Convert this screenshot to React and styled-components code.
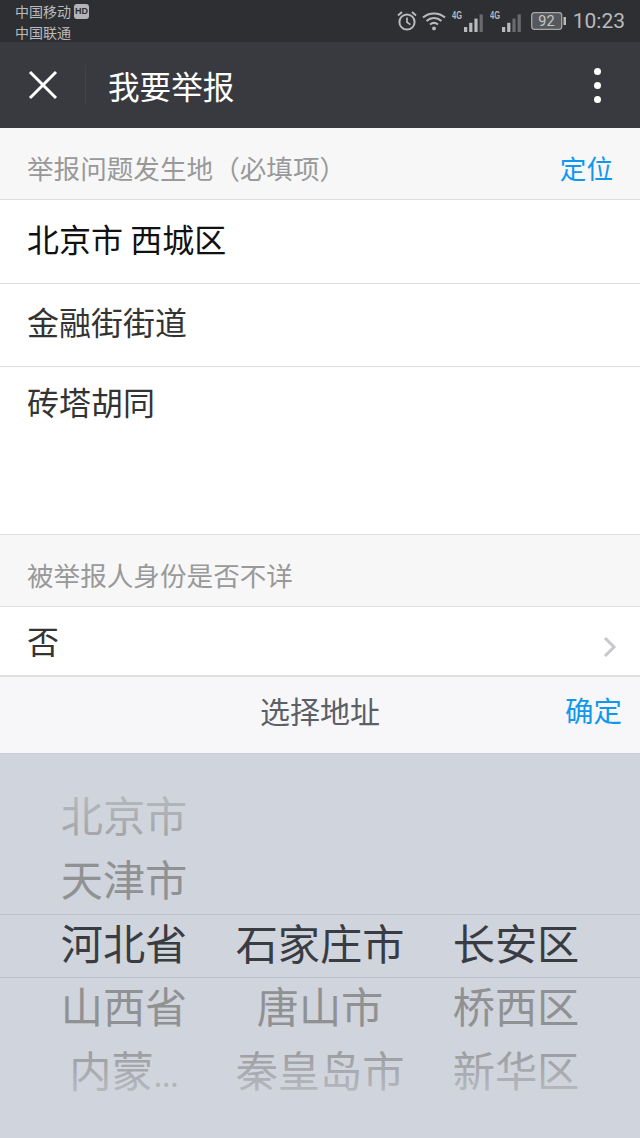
import React from "react";
import styled, { createGlobalStyle } from "styled-components";

const Global = createGlobalStyle`
  html, body { margin: 0; padding: 0; background: #fff; }
  * { box-sizing: border-box; }
  body { font-family: "Noto Sans CJK SC", "Noto Sans", sans-serif; }
`;

const Page = styled.div`
  width: 640px;
  height: 1138px;
  display: flex;
  flex-direction: column;
  overflow: hidden;
`;

const StatusBar = styled.div`
  height: 42px;
  background: #2e2f33;
  display: flex;
  justify-content: space-between;
  align-items: center;
  padding: 0 15px 0 15px;
  color: #b9babc;
`;

const Carriers = styled.div`
  display: flex;
  flex-direction: column;
  font-size: 14px;
  line-height: 21px;
  margin-top: 1px;
`;

const Carrier = styled.div`
  display: flex;
  align-items: center;
  gap: 3px;
  height: 21px;
`;

const HdBadge = styled.span`
  width: 15px;
  height: 15px;
  border-radius: 3px;
  background: #b3b4b6;
  color: #2e2f33;
  font: 700 9px/15px "Liberation Sans", sans-serif;
  text-align: center;
`;

const StatusRight = styled.div`
  display: flex;
  align-items: center;
`;

const Clock = styled.span`
  font: 400 21px/42px Roboto, sans-serif;
  margin-left: 7px;
  color: #b9babc;
`;

const NavBar = styled.header`
  height: 86px;
  background: #393a3f;
  display: flex;
  align-items: center;
  color: #fff;
`;

const CloseButton = styled.div`
  width: 86px;
  height: 40px;
  display: flex;
  align-items: center;
  justify-content: center;
  border-right: 1px solid #414247;
`;

const NavTitle = styled.h1`
  flex: 1;
  margin: 0 0 0 22px;
  font-size: 31.6px;
  line-height: 44px;
  font-weight: 400;
`;

const MoreButton = styled.div`
  width: 86px;
  display: flex;
  flex-direction: column;
  align-items: center;
  gap: 7px;
`;

const Dot = styled.span`
  width: 7px;
  height: 7px;
  border-radius: 50%;
  background: #fff;
`;

const SectionHead = styled.div`
  height: ${(p) => p.$h}px;
  background: #f7f7f8;
  border-bottom: 1px solid #dedfe0;
  display: flex;
  justify-content: space-between;
  align-items: flex-end;
  padding: 0 27px ${(p) => p.$pb}px;
  font-size: 26.6px;
  line-height: 40px;
  color: #999;
`;

const LocateLink = styled.span`
  color: #1098ee;
`;

const Row = styled.div`
  height: ${(p) => p.$h}px;
  background: #fff;
  border-bottom: ${(p) => p.$bw || 1}px solid #dfdfe0;
  padding: ${(p) => p.$pt}px 27px 0;
  display: flex;
  justify-content: space-between;
  align-items: flex-start;
  font-size: 32px;
  line-height: 46px;
  color: ${(p) => p.$color || "#333"};
`;

const Chevron = styled.svg`
  margin-top: 19px;
  margin-right: -4px;
`;

const PickerToolbar = styled.div`
  height: 77px;
  background: #f7f7f9;
  border-bottom: 1px solid #c9ccd2;
  position: relative;
  display: flex;
  justify-content: center;
  align-items: center;
  font-size: 30px;
  color: #5b5f66;
  padding-bottom: 11px;
`;

const ConfirmButton = styled.span`
  position: absolute;
  right: 18px;
  top: 11px;
  font-size: 28.5px;
  line-height: 44px;
  color: #1098ee;
`;

const Picker = styled.div`
  flex: 1;
  background: #d0d4dc;
  position: relative;
  display: grid;
  grid-template-columns: repeat(3, 1fr);
  padding: 28px 26px 0;
`;

const Band = styled.div`
  position: absolute;
  left: 0;
  right: 0;
  top: 160px;
  height: 64px;
  border-top: 1px solid #bcc0c8;
  border-bottom: 1px solid #bcc0c8;
  pointer-events: none;
`;

const TopFade = styled.div`
  position: absolute;
  left: 0;
  right: 0;
  top: 30px;
  height: 60px;
  background: linear-gradient(to bottom, rgba(208, 212, 220, 0.55), rgba(208, 212, 220, 0));
  pointer-events: none;
`;

const BottomFade = styled.div`
  position: absolute;
  left: 0;
  right: 0;
  top: 292px;
  height: 56px;
  background: linear-gradient(to bottom, rgba(208, 212, 220, 0), rgba(208, 212, 220, 0.65));
  pointer-events: none;
`;

const Column = styled.div`
  display: flex;
  flex-direction: column;
  align-items: center;
  padding-top: ${(p) => p.$offset * 63.8}px;
`;

const Item = styled.div`
  height: 63.8px;
  line-height: 63px;
  font-size: 42.2px;
  white-space: nowrap;
  color: ${(p) => p.$color};
`;

const Dots = styled.span`
  font-size: 30px;
`;

const Alarm = () => (
  <svg width="22" height="22" viewBox="0 0 22 22" fill="none" stroke="#b9babc">
    <circle cx="11" cy="12" r="7.6" strokeWidth="2" />
    <path d="M11 7.5V12.3L14.4 14.6" strokeWidth="1.7" />
    <path d="M2 5.5L6 2M20 5.5L16 2" strokeWidth="2" />
  </svg>
);

const Wifi = () => (
  <svg width="24" height="20" viewBox="0 0 24 20" fill="none" stroke="#b9babc" strokeWidth="2" style={{ marginLeft: 4 }}>
    <path d="M1 6.5C7 1 17 1 23 6.5" />
    <path d="M4.5 10C9 6 15 6 19.5 10" />
    <path d="M8 13.5C10.5 11.5 13.5 11.5 16 13.5" />
    <circle cx="12" cy="17.4" r="1.9" fill="#b9babc" stroke="none" />
  </svg>
);

const Signal = ({ lit, gap }) => (
  <svg width="33" height="24" viewBox="0 0 33 24" style={{ marginLeft: gap }}>
    <text x="0" y="10" fontFamily="Liberation Sans, sans-serif" fontWeight="700" fontSize="11" textLength="10" lengthAdjust="spacingAndGlyphs" fill="#b9babc">4G</text>
    {[0, 1, 2, 3].map((i) => (
      <rect key={i} x={12 + i * 5.2} y={18 - i * 4.2} width="3.2" height={5 + i * 4.2} fill={i < lit ? "#b9babc" : "#6a6b6e"} />
    ))}
  </svg>
);

const Battery = () => (
  <svg width="35" height="18" viewBox="0 0 35 18" style={{ marginLeft: 8 }}>
    <rect x="0.7" y="0.7" width="30" height="16.6" rx="2.5" fill="#57585b" stroke="#a5a6a8" strokeWidth="1.3" />
    <rect x="32.5" y="5" width="2.5" height="8" fill="#b9babc" />
    <text x="15.5" y="14" textAnchor="middle" fontFamily="Roboto, sans-serif" fontSize="14.5" fill="#c5c6c8">92</text>
  </svg>
);

const provinces = [
  ["北京市", "#a0a2a5"],
  ["天津市", "#8f9193"],
  ["河北省", "#393c42"],
  ["山西省", "#8f9193"],
  [<>内蒙<Dots>...</Dots></>, "#98999c"],
];
const cities = [
  ["石家庄市", "#393c42"],
  ["唐山市", "#8f9193"],
  ["秦皇岛市", "#98999c"],
];
const districts = [
  ["长安区", "#393c42"],
  ["桥西区", "#8f9193"],
  ["新华区", "#98999c"],
];

const WheelColumn = ({ items, offset = 0 }) => (
  <Column $offset={offset}>
    {items.map(([label, color], i) => (
      <Item key={i} $color={color}>{label}</Item>
    ))}
  </Column>
);

export default function App() {
  return (
    <Page>
      <Global />
      <StatusBar>
        <Carriers>
          <Carrier>中国移动<HdBadge>HD</HdBadge></Carrier>
          <Carrier>中国联通</Carrier>
        </Carriers>
        <StatusRight>
          <Alarm />
          <Wifi />
          <Signal lit={3} gap={6} />
          <Signal lit={2} gap={5} />
          <Battery />
          <Clock>10:23</Clock>
        </StatusRight>
      </StatusBar>
      <NavBar>
        <CloseButton>
          <svg width="30" height="30" viewBox="0 0 30 30" stroke="#fff" strokeWidth="3" fill="none">
            <path d="M2 2L28 28M28 2L2 28" />
          </svg>
        </CloseButton>
        <NavTitle>我要举报</NavTitle>
        <MoreButton>
          <Dot /><Dot /><Dot />
        </MoreButton>
      </NavBar>
      <SectionHead $h={72} $pb={11}>
        <span>举报问题发生地（必填项）</span>
        <LocateLink>定位</LocateLink>
      </SectionHead>
      <Row $h={84} $pt={15} $color="#111">北京市 西城区</Row>
      <Row $h={83} $pt={14}>金融街街道</Row>
      <Row $h={168} $pt={11}>砖塔胡同</Row>
      <SectionHead $h={72} $pb={11}>
        <span>被举报人身份是否不详</span>
      </SectionHead>
      <Row $h={70} $pt={10} $bw={2}>
        否
        <Chevron width="14" height="22" viewBox="0 0 14 22" fill="none" stroke="#c7c7cc" strokeWidth="3">
          <path d="M2 2L11 11L2 20" />
        </Chevron>
      </Row>
      <PickerToolbar>
        选择地址
        <ConfirmButton>确定</ConfirmButton>
      </PickerToolbar>
      <Picker>
        <WheelColumn items={provinces} />
        <WheelColumn items={cities} offset={2} />
        <WheelColumn items={districts} offset={2} />
        <Band />
        <TopFade />
        <BottomFade />
      </Picker>
    </Page>
  );
}
